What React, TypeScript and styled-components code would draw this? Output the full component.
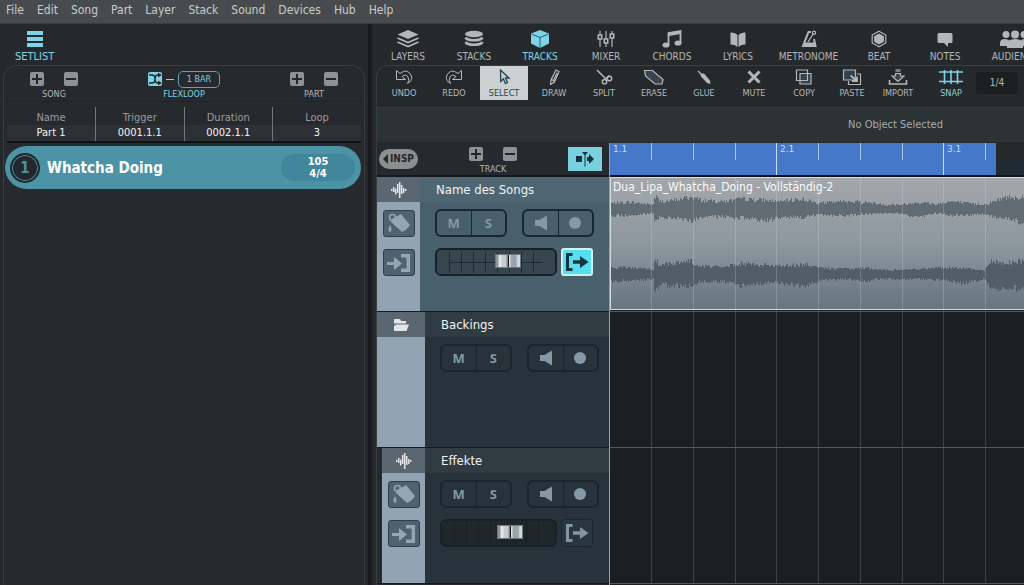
import React from "react";
import styled, { createGlobalStyle, css } from "styled-components";

const sans = `"DejaVu Sans Condensed", "DejaVu Sans", Tahoma, sans-serif`;
const accent = "#7fd3e6";

const Global = createGlobalStyle`
  *, *::before, *::after { box-sizing: border-box; }
  body { margin: 0; background: #26292c; color: #b4b8ba; font: 11px/14px ${sans}; }
  button, select { font: inherit; color: inherit; border: 0; padding: 0; margin: 0; background: none; }
  svg { display: block; flex: none; }
`;

/* ---------- frame ---------- */
const Page = styled.div`
  display: flex;
  flex-direction: column;
  height: 100vh;
  overflow: hidden;
`;
const MenuBar = styled.nav`
  display: flex;
  gap: 13px;
  height: 24px;
  padding: 0 6px 4px;
  background: #484b4d;
  border-bottom: 1px solid #3a3d3f;
  flex: none;
`;
const MenuItem = styled.button`
  font-size: 12px;
  color: #c9cbcc;
`;
const Workspace = styled.div`
  display: flex;
  flex: 1;
  min-height: 0;
`;

/* ---------- setlist ---------- */
const Sidebar = styled.aside`
  display: flex;
  flex-direction: column;
  width: 372px;
  flex: none;
  padding: 6px 3px 0;
  border-right: 4px solid #181a1c;
`;
const Tab = styled.button<{ $active?: boolean; $size?: number }>`
  display: flex;
  flex-direction: column;
  align-items: center;
  gap: 2px;
  font-size: ${(p) => p.$size ?? 10}px;
  line-height: 14px;
  color: ${(p) => (p.$active ? accent : "#b4b6b8")};
`;
const SidebarHead = styled.div`
  display: flex;
  padding-left: 12px;
  height: 35px;
`;
const SetPanel = styled.section`
  flex: 1;
  border: 1px solid #3a3e41;
  border-bottom: 0;
  border-radius: 14px 14px 0 0;
  background: #26292d;
`;
const SetTools = styled.div`
  display: flex;
  justify-content: space-between;
  height: 36px;
  padding: 5px 26px 0;
  border-bottom: 1px solid #222528;
`;
const ToolGroup = styled.div<{ $active?: boolean }>`
  display: flex;
  flex-direction: column;
  align-items: center;
  gap: 1px;
  font-size: 9px;
  line-height: 12px;
  color: ${(p) => (p.$active ? accent : "#b4b6b8")};
`;
const ToolPair = styled.div<{ $gap: number }>`
  display: flex;
  align-items: center;
  gap: ${(p) => p.$gap}px;
  height: 16px;
`;
const SquareButton = styled.button<{ $active?: boolean }>`
  display: grid;
  place-items: center;
  width: 14px;
  height: 14px;
  border-radius: 2px;
  color: #222629;
  background: ${(p) => (p.$active ? accent : "#8f9294")};
`;
const Dash = styled.span`
  width: 8px;
  height: 1px;
  background: ${accent};
`;
const BarLength = styled.button`
  width: 42px;
  height: 17px;
  border: 1px solid #5fa3b6;
  border-radius: 5px;
`;
const PartTable = styled.table`
  width: calc(100% - 6px);
  margin: 5px 3px 0;
  table-layout: fixed;
  border-collapse: collapse;
  border-bottom: 2px solid #111315;
  text-align: center;
  th { height: 17px; padding: 4px 0 0; font-weight: 400; color: #9a9d9f; }
  td { height: 17px; padding: 0; color: #f0f1f1; background: #2d3135; }
  th + th, td + td { border-left: 1px solid #73777a; }
`;
const SongButton = styled.button`
  display: flex;
  align-items: center;
  gap: 7px;
  width: calc(100% - 4px);
  height: 43px;
  margin: 3px 1px 0;
  padding: 0 6px 0 5px;
  border-radius: 22px;
  background: #4c93a6;
  color: #fff;
  font-weight: 700;
  font-size: 15px;
  text-align: left;
`;
const SongNumber = styled.span`
  display: grid;
  place-items: center;
  width: 30px;
  height: 30px;
  border-radius: 50%;
  border: 2px solid #20282d;
  box-shadow: inset 0 0 0 1px #4c93a6;
  background: #24282c;
  color: #4c93a6;
`;
const SongTitle = styled.span`
  flex: 1;
`;
const Tempo = styled.span`
  display: flex;
  flex-direction: column;
  align-items: center;
  width: 74px;
  padding: 2px 0 1px;
  border-radius: 14px;
  background: #41869a;
  font-size: 11px;
  line-height: 12px;
`;

/* ---------- main pane ---------- */
const Main = styled.main`
  display: flex;
  flex-direction: column;
  flex: 1;
  min-width: 0;
  overflow: hidden;
`;
const ViewTabs = styled.nav`
  display: grid;
  grid-template-columns: repeat(6, 66px) 75px repeat(2, 66px) 74px;
  height: 41px;
  padding: 6px 0 0 3px;
`;
const EditPanel = styled.section`
  display: flex;
  flex-direction: column;
  flex: 1;
  margin-left: 4px;
  border: solid #3a3e41;
  border-width: 1px 0 0 1px;
  border-radius: 12px 0 0 0;
`;
const Toolbar = styled.div`
  display: flex;
  align-items: flex-start;
  gap: 2px;
  height: 42px;
  padding-left: 3px;
  border-bottom: 1px solid #36393c;
`;
const Tool = styled.button<{ $w: number; $state?: "on" | "accent" }>`
  display: flex;
  flex-direction: column;
  align-items: center;
  flex: none;
  gap: 2px;
  width: ${(p) => p.$w}px;
  height: 34px;
  padding-top: 3px;
  font-size: 9px;
  line-height: 12px;
  color: #b4b8ba;
  ${(p) => p.$state === "on" && css`background: #cdd0d0; color: #1f4354;`}
  ${(p) => p.$state === "accent" && css`color: ${accent}; margin: 0 0 0 6px;`}
`;
const SnapValue = styled.select`
  appearance: none;
  flex: none;
  width: 42px;
  height: 22px;
  margin: 6px 0 0;
  border-radius: 4px;
  background: #1b1f21;
  font-size: 10px;
  text-align: center;
  text-align-last: center;
`;
const InfoBar = styled.div`
  display: grid;
  place-items: center;
  height: 35px;
  padding-left: 390px;
  border-bottom: 1px solid #25282b;
  background: #2b3335;
  color: #a6abad;
  span { white-space: nowrap; }
`;
const Arranger = styled.div`
  display: flex;
  flex: 1;
  min-height: 0;
`;
const TrackColumn = styled.div`
  width: 232px;
  flex: none;
  background: #26292d;
`;
const TrackTools = styled.div`
  display: flex;
  align-items: flex-start;
  justify-content: space-between;
  height: 34px;
  padding: 3px 7px 0 2px;
  border-bottom: 2px solid #16191b;
`;
const InspectorButton = styled.button`
  display: flex;
  align-items: center;
  justify-content: center;
  gap: 2px;
  width: 39px;
  height: 20px;
  margin-top: 3px;
  border-radius: 10px;
  background: #8c8f90;
  color: #24282b;
  font-weight: 700;
  font-size: 10px;
`;
const FollowButton = styled.button`
  display: grid;
  place-items: center;
  width: 34px;
  height: 24px;
  margin-top: 1px;
  background: #79d0df;
  color: #12323d;
`;

/* ---------- tracks ---------- */
const TrackRow = styled.article<{ $indent?: boolean }>`
  display: flex;
  height: 136px;
  padding-left: ${(p) => (p.$indent ? 5 : 0)}px;
  border-bottom: 1px solid #151a1d;
  &:first-of-type { height: 135px; }
`;
const Strip = styled.div<{ $w: number }>`
  display: flex;
  flex-direction: column;
  align-items: center;
  width: ${(p) => p.$w}px;
  background: #92a3b4;
`;
const StripHead = styled.div`
  display: grid;
  place-items: center;
  align-self: stretch;
  height: 25px;
  margin-bottom: 8px;
  background: #5a6771;
  color: #e2e6e8;
`;
const StripButton = styled.button`
  display: grid;
  place-items: center;
  width: 32px;
  height: 27px;
  margin-bottom: 12px;
  border: 1px solid #303e48;
  border-radius: 3px;
  background: #506270;
  color: #93a6b2;
`;
const TrackBody = styled.div<{ $selected?: boolean }>`
  flex: 1;
  min-width: 0;
  background: ${(p) => (p.$selected ? "#47606c" : "#27323a")};
`;
const TrackName = styled.h2<{ $selected?: boolean }>`
  height: 25px;
  margin: 0 0 7px;
  padding-left: 16px;
  font-size: 13px;
  font-weight: 400;
  line-height: 26px;
  color: #f1f3f4;
  background: ${(p) => (p.$selected ? "#4e6672" : "#303b42")};
`;
const ButtonRow = styled.div`
  display: flex;
  gap: 15px;
  padding-left: 15px;
  margin-bottom: 11px;
`;
const Segmented = styled.div`
  display: flex;
  width: 72px;
  height: 28px;
  border: 2px solid #1a262e;
  border-radius: 6px;
`;
const Segment = styled.button`
  display: grid;
  place-items: center;
  flex: 1;
  color: #8499a5;
  font: 700 13px/14px "Noto Sans", sans-serif;
  & + & { border-left: 1px solid #1a262e; }
`;
const FaderRow = styled.div`
  display: flex;
  gap: 4px;
  padding: 0 16px 0 15px;
`;
const Fader = styled.input<{ $lit?: boolean }>`
  appearance: none;
  flex: 1;
  min-width: 0;
  height: 28px;
  margin: 0;
  padding: 0 1px;
  border: 2px solid #17212a;
  border-radius: 6px;
  background:
    linear-gradient(${(p) => (p.$lit ? "#1e2b33" : "#1f272b")}, ${(p) => (p.$lit ? "#1e2b33" : "#1f272b")}) 12px 12px / calc(100% - 24px) 1px no-repeat,
    repeating-linear-gradient(90deg, ${(p) => (p.$lit ? "#1e2b33" : "#182024")} 0 1px, transparent 1px 12px) 12px 2px / calc(100% - 23px) 21px no-repeat,
    ${(p) => (p.$lit ? "#37464f" : "#1f272b")};
  &::-webkit-slider-thumb {
    appearance: none;
    width: 26px;
    height: 14px;
    margin-top: -2px;
    border: 1px solid #6f787e;
    background: linear-gradient(90deg, #8d9599 0 2px, #e3e5e6 3px 5px, #c9cccd 6px 10px, #7f888d 11px 12px, #11181c 12px 13px, #dfe2e3 13px 14px, #9aa3ac 15px 20px, #d5d9db 22px);
  }
`;
const RouteButton = styled.button<{ $on?: boolean }>`
  display: grid;
  place-items: center;
  width: 32px;
  height: 28px;
  border-radius: 3px;
  border: 1px solid #1a252c;
  background: #2a363e;
  color: #8397a3;
  ${(p) => p.$on && css`border: 2px solid #cdf3f7; background: #56dfee; color: #14353f;`}
`;

/* ---------- timeline ---------- */
const beatLines = (color: string) => css`
  background-image: linear-gradient(90deg,
    transparent 41px, ${color} 41px 42px, transparent 42px 83px, ${color} 83px 84px,
    transparent 84px 125px, ${color} 125px 126px, transparent 126px 166px, ${color} 166px);
  background-size: 167px 100%;
`;
const Timeline = styled.div`
  display: flex;
  flex-direction: column;
  flex: 1;
  min-width: 0;
  border-left: 1px solid #8e9ade;
  overflow: hidden;
`;
const Ruler = styled.div`
  height: 34px;
  flex: none;
  background: linear-gradient(#25292c 0 16px, #1f2a33 16px 32px, #111315 32px);
`;
const LoopRange = styled.div`
  display: flex;
  width: 386px;
  height: 32px;
  overflow: hidden;
  background: #4678c9;
`;
const RulerBar = styled.div`
  flex: none;
  width: 167px;
  height: 32px;
  padding: 0 3px;
  border-right: 1px solid #c6dcf8;
  background-image: linear-gradient(90deg,
    transparent 41px, #a9c6ef 41px 42px, transparent 42px 83px, #a9c6ef 83px 84px,
    transparent 84px 125px, #a9c6ef 125px 126px, transparent 126px);
  background-size: 100% 17px;
  background-repeat: no-repeat;
  font: 9px/12px "DejaVu Sans", sans-serif;
  color: #c4daf7;
`;
const Lane = styled.div`
  height: 136px;
  flex: none;
  border-bottom: 1px solid #54585b;
  background-color: #1b1f21;
  ${beatLines("#3c4143")}
  &:nth-child(2) { height: 135px; }
`;
const LaneRest = styled.div`
  flex: 1;
  background: #1b1f21;
`;
const Clip = styled.div`
  position: relative;
  height: 133px;
  overflow: hidden;
  border: solid #d9dcde;
  border-width: 1px 0 1px 1px;
  background: linear-gradient(#a3a7ab, #8d979e 50%, #667580);
  &::after {
    content: "";
    position: absolute;
    inset: 0;
    left: -1px;
    ${beatLines("rgba(205, 215, 222, 0.25)")}
  }
`;
const ClipName = styled.span`
  position: absolute;
  left: 2px;
  top: 2px;
  white-space: nowrap;
  color: #fafbfb;
  font-size: 12px;
`;

/* ---------- icons ---------- */
const Svg = ({ w = 20, h = 16, children }: { w?: number; h?: number; children: React.ReactNode }) => (
  <svg width={w} height={h} viewBox={`0 0 ${w} ${h}`} fill="none" stroke="currentColor" strokeWidth="1.2" aria-hidden="true">
    {children}
  </svg>
);
const solid = { fill: "currentColor", stroke: "none" };

const icons = {
  setlist: <Svg w={16} h={18}><path {...solid} d="M0 1h16v4H0zM0 7h16v4H0zM0 13h16v4H0z" /></Svg>,
  plus: <Svg w={14} h={14}><path strokeWidth="2" d="M7 2v10M2 7h10" /></Svg>,
  minus: <Svg w={14} h={14}><path strokeWidth="2" d="M2 7h10" /></Svg>,
  flex: <Svg w={14} h={14}><path strokeWidth="1.5" d="M1 3h3Q7 3 7 7t3 4h3M1 11h3Q7 11 7 7t3-4h3" /><path {...solid} d="m10 .5 3.500 2.500L10 5.500zM10 8.500l3.500 2.500-3.500 2.500z" /></Svg>,
  layers: <Svg w={24} h={18}><path {...solid} d="M12 0 22.500 4.500 12 9 1.500 4.500z" /><path strokeWidth="1.700" d="m1.500 8 10.500 4.500L22.500 8M1.500 12l10.500 4.500L22.500 12" /></Svg>,
  stacks: <Svg w={20} h={18}><ellipse {...solid} cx="10" cy="4" rx="9" ry="3.200" /><path strokeWidth="2.600" d="M1.500 7.500c2 3.600 15 3.600 17 0M1.500 12c2 3.600 15 3.600 17 0" /></Svg>,
  tracks: <Svg w={20} h={18}><path {...solid} d="m10 0 9 3.500v10L10 18l-9-4.500v-10z" /><path stroke="#26606f" strokeWidth="1" d="m1.500 4 8.500 3.500L18.500 4M10 7.500V18" /></Svg>,
  mixer: <Svg w={20} h={18}><path d="M4 1v16M10 1v16M16 1v16" /><path fill="#26292c" strokeWidth="1.600" d="M2.300 5h3.400v4H2.300zM8.300 9h3.400v4H8.300zM14.300 4h3.400v4h-3.400z" /></Svg>,
  chords: <Svg w={20} h={18}><path strokeWidth="1.800" d="M6.500 15V3l12-2v12" /><path strokeWidth="3" d="M6.500 4.500l12-2" /><ellipse {...solid} cx="4" cy="15" rx="3.500" ry="2.600" /><ellipse {...solid} cx="16" cy="13" rx="3.500" ry="2.600" /></Svg>,
  lyrics: <Svg w={18} h={18}><path {...solid} d="M1.500 2.500Q6 2 8.500 5v12Q6 14 1.500 14.500zM16.500 2.500Q12 2 9.500 5v12q2.500-3 7-2.500z" /></Svg>,
  metronome: <Svg w={18} h={18}><path strokeWidth="2" d="M11 2H8.500L3 16h12.500L14 9" /><path {...solid} d="M4.500 12.500h10V16h-11z" /><path strokeWidth="1.300" d="m8 12 5.500-8.500" /><circle cx="14" cy="2.700" r="1.600" /></Svg>,
  beat: <Svg w={16} h={18}><path d="m8 1.200 6.800 3.900v7.800L8 16.800l-6.800-3.900V5.100z" /><path {...solid} d="m8 3.500 4.900 2.800v5.400L8 14.500l-4.900-2.800V6.300z" /></Svg>,
  notes: <Svg w={18} h={18}><path {...solid} d="M3 3h12q1.500 0 1.500 1.500v7Q16.500 13 15 13h-3v4l-4-4H3q-1.500 0-1.500-1.500v-7Q1.500 3 3 3z" /></Svg>,
  audience: <Svg w={32} h={18}><g {...solid}><circle cx="7" cy="4.500" r="3.500" /><circle cx="16" cy="4.500" r="4" /><circle cx="25" cy="4.500" r="3.500" /><path d="M1 16v-3q0-4 5-4 3 0 4 1.500Q12 9 16 9t6 1.500Q23 9 26 9q5 0 5 4v3h-7v2H8v-2z" /></g></Svg>,
  undo: <Svg><path strokeWidth="1" d="M2.500 1.500v9h9L8 7.500Q12 4.500 14 8t-.5 6.500Q18.500 12 17.500 7 13.500-1.500 6 4.500z" /></Svg>,
  redo: <Svg><path strokeWidth="1" d="M17.500 1.500v9h-9l3.500-3Q8 4.500 6 8t.5 6.500Q1.500 12 2.500 7 6.500-1.500 14 4.500z" /></Svg>,
  select: <Svg><path strokeWidth="1.300" d="m6.500 1 .3 11.500 2.600-2.700 2 4.700 2.100-1-2-4.500h3.500z" /></Svg>,
  draw: <Svg><path d="m12 1 3 1.500-4.500 10.500-4 2.500.5-4.500zM7.500 10.500l3 2M13 4l-3.500 7.500" /></Svg>,
  split: <Svg><path strokeWidth="1.500" d="m3 1 9 9M15.500 6.500l-4 3.500" /><circle cx="10.500" cy="12.700" r="2.200" strokeWidth="1.400" /><circle cx="15.500" cy="9.500" r="2.200" strokeWidth="1.400" /></Svg>,
  erase: <Svg w={22}><path fill="#39444e" d="M1.500 1.500h8L20 10.500 19 15h-7L2.500 7z" /></Svg>,
  glue: <Svg><path strokeWidth="1.300" d="m4 2 4 4" /><path {...solid} d="M7 4.500h3l6 7 .5 3.500-3.500-1-6.500-7z" /></Svg>,
  mute: <Svg><path strokeWidth="3" d="m4.500 2.500 11 11M15.500 2.500l-11 11" /></Svg>,
  copy: <Svg><path d="M2.500 1h11v10.500h-11z" /><path fill="#33414c" d="M6 4.500h11V15H6z" /><path d="M13.500 4v7.500H6" /></Svg>,
  paste: <Svg><path fill="#33414c" d="M1.500 1h12v10h-12z" /><path d="M15 5h3.500v10.500h-12V12" /><path strokeWidth="1.800" d="m8.500 6.500 6 5M15 7.500V12h-5" /></Svg>,
  import: <Svg><path strokeWidth="1.600" d="M1.500 11v4h17v-4" /><path {...solid} opacity="0.600" d="M7.500 0h5v3h-5z" /><path fill="#39444e" d="M7.500 4.500h5V7H16l-6 5.500L4 7h3.500z" /></Svg>,
  snap: <Svg w={24}><path strokeWidth="1.600" d="M0 3h24M0 12.500h24M5.500 1v14M12 1v14M18.500 1v14" /></Svg>,
  arrowLeft: <Svg w={5} h={10}><path {...solid} d="M5 0v10L0 5z" /></Svg>,
  follow: <Svg w={20} h={16}><path {...solid} d="M1 5h6v6H1zM12 6h2V3l5 5-5 5v-3h-2zM7 1h6l-2.500 3v11.500h-1V4z" /></Svg>,
  wave: <Svg w={16} h={18}><path strokeWidth="1.500" d="M.7 8v2M2.700 6v5M4.700 7.500v6M6.700 3v9M8.700 1v16M10.700 4v9M12.700 7v5M14.700 8v2" /></Svg>,
  folder: <Svg w={16} h={14}><path {...solid} d="M1 1h6l1 2h5v2.500H1zM3.500 6.500H16L13.500 13H1V8z" /></Svg>,
  paint: <Svg w={24} h={22}><path {...solid} d="M5 6 14 1l9 11q-3 5-8 7L4 9zM3 12q-3 6 0 7 3-1 0-7z" /><circle cx="5.500" cy="4.500" r="3" strokeWidth="1.600" /></Svg>,
  routeIn: <Svg w={24} h={20}><path strokeWidth="3" d="M0 10.500h9" /><path {...solid} d="m7 4 8 6.500L7 17z" /><path strokeWidth="3.500" d="M14 2.700h7.300v14.600H14" /></Svg>,
  routeOut: <Svg w={24} h={20}><path strokeWidth="3" d="M7.500 2.500H2.500v15h5" /><path strokeWidth="3.500" d="M8 10h8" /><path {...solid} d="m15 4 8.500 6L15 16z" /></Svg>,
  speaker: <Svg w={14} h={16}><path {...solid} d="M1 5h4.500L13 .500v15L5.500 11H1z" /></Svg>,
  record: <Svg w={14} h={14}><circle {...solid} cx="7" cy="7" r="6" /></Svg>,
};

/* ---------- waveform ---------- */
type Env = [number, number, number][];
const upper: Env = [
  [0, 7, 8], [20, 8, 8], [42, 5, 5], [43, 14, 15], [46, 14, 15], [48, 9, 10], [60, 10, 10], [80, 14, 14], [92, 10, 10], [112, 9, 9],
  [130, 12, 11], [157, 10, 14], [170, 9, 9], [192, 12, 10], [207, 7, 7], [235, 9, 8], [255, 8, 6], [275, 5, 5], [290, 5, 5],
  [305, 8, 10], [325, 6, 5], [340, 9, 8], [373, 5, 6], [382, 9, 9], [395, 14, 11], [414, 14, 18], [500, 12, 14], [700, 9, 10], [1400, 9, 10],
];
const lower: Env = [
  [0, 7, 9], [20, 8, 8], [42, 5, 6], [43, 16, 19], [46, 16, 19], [48, 9, 12], [60, 13, 14], [80, 15, 14], [88, 9, 9], [112, 9, 9],
  [130, 13, 14], [157, 10, 10], [195, 11, 14], [210, 7, 7], [235, 6, 6], [255, 7, 9], [265, 5, 6], [290, 5, 6],
  [315, 6, 6], [335, 8, 7], [350, 7, 11], [373, 5, 6], [380, 15, 19], [395, 13, 15], [414, 16, 20], [500, 14, 14], [700, 9, 10], [1400, 9, 10],
];
const WAVE_WIDTH = 1400;

function wavePath(env: Env, mid: number, seed: number) {
  let s = seed;
  const rnd = () => ((s = (s * 1103515245 + 12345) % 2147483648) / 2147483648);
  const tops: string[] = [];
  const bottoms: string[] = [];
  let k = 0;
  for (let x = 0; x < WAVE_WIDTH; x++) {
    while (k < env.length - 2 && env[k + 1][0] <= x) k++;
    const [x0, u0, d0] = env[k];
    const [x1, u1, d1] = env[k + 1];
    const t = (x - x0) / (x1 - x0);
    const up = (u0 + (u1 - u0) * t) * (0.64 + 0.4 * rnd());
    const down = (d0 + (d1 - d0) * t) * (0.64 + 0.4 * rnd());
    tops.push(`${x} ${Math.round(mid - up)}H${x + 1}`);
    bottoms.unshift(`${x + 1} ${Math.round(mid + down)}H${x}`);
  }
  return `M${tops.join("L")}L${bottoms.join("L")}z`;
}
const upperPath = wavePath(upper, 31, 7);
const lowerPath = wavePath(lower, 96, 91);

/* ---------- data ---------- */
const menu = ["File", "Edit", "Song", "Part", "Layer", "Stack", "Sound", "Devices", "Hub", "Help"];
const views: [string, keyof typeof icons][] = [
  ["LAYERS", "layers"], ["STACKS", "stacks"], ["TRACKS", "tracks"], ["MIXER", "mixer"], ["CHORDS", "chords"],
  ["LYRICS", "lyrics"], ["METRONOME", "metronome"], ["BEAT", "beat"], ["NOTES", "notes"], ["AUDIENCE", "audience"],
];
const tools: [string, keyof typeof icons][] = [
  ["UNDO", "undo"], ["REDO", "redo"], ["SELECT", "select"], ["DRAW", "draw"], ["SPLIT", "split"], ["ERASE", "erase"],
  ["GLUE", "glue"], ["MUTE", "mute"], ["COPY", "copy"],
];

const AddRemove = ({ label }: { label: string }) => (
  <ToolGroup>
    <ToolPair $gap={20}>
      <SquareButton aria-label={`Add ${label.toLowerCase()}`}>{icons.plus}</SquareButton>
      <SquareButton aria-label={`Remove ${label.toLowerCase()}`}>{icons.minus}</SquareButton>
    </ToolPair>
    {label}
  </ToolGroup>
);

interface TrackProps {
  name: string;
  selected?: boolean;
  indent?: boolean;
  folder?: boolean;
}
const Track = ({ name, selected, indent, folder }: TrackProps) => (
  <TrackRow $indent={indent}>
    <Strip $w={selected || indent ? 43 : 48}>
      <StripHead>{folder ? icons.folder : icons.wave}</StripHead>
      {!folder && (
        <>
          <StripButton aria-label={`${name} colour`}>{icons.paint}</StripButton>
          <StripButton aria-label={`${name} input`}>{icons.routeIn}</StripButton>
        </>
      )}
    </Strip>
    <TrackBody $selected={selected}>
      <TrackName $selected={selected}>{name}</TrackName>
      <ButtonRow>
        <Segmented>
          <Segment>M</Segment>
          <Segment>S</Segment>
        </Segmented>
        <Segmented>
          <Segment aria-label="Monitor">{icons.speaker}</Segment>
          <Segment aria-label="Record">{icons.record}</Segment>
        </Segmented>
      </ButtonRow>
      {!folder && (
        <FaderRow>
          <Fader type="range" min={0} max={100} defaultValue={63} $lit={selected} aria-label={`${name} volume`} />
          <RouteButton $on={selected} aria-label={`${name} output`}>{icons.routeOut}</RouteButton>
        </FaderRow>
      )}
    </TrackBody>
  </TrackRow>
);

export default function App() {
  return (
    <Page>
      <Global />
      <MenuBar>
        {menu.map((m) => <MenuItem key={m}>{m}</MenuItem>)}
      </MenuBar>
      <Workspace>
        <Sidebar>
          <SidebarHead>
            <Tab $active $size={11}>{icons.setlist}SETLIST</Tab>
          </SidebarHead>
          <SetPanel>
            <SetTools>
              <AddRemove label="SONG" />
              <ToolGroup $active>
                <ToolPair $gap={4}>
                  <SquareButton $active aria-label="Flexloop">{icons.flex}</SquareButton>
                  <Dash />
                  <BarLength>1 BAR</BarLength>
                </ToolPair>
                FLEXLOOP
              </ToolGroup>
              <AddRemove label="PART" />
            </SetTools>
            <PartTable>
              <thead>
                <tr><th>Name</th><th>Trigger</th><th>Duration</th><th>Loop</th></tr>
              </thead>
              <tbody>
                <tr><td>Part 1</td><td>0001.1.1</td><td>0002.1.1</td><td>3</td></tr>
              </tbody>
            </PartTable>
            <SongButton>
              <SongNumber>1</SongNumber>
              <SongTitle>Whatcha Doing</SongTitle>
              <Tempo><span>105</span><span>4/4</span></Tempo>
            </SongButton>
          </SetPanel>
        </Sidebar>
        <Main>
          <ViewTabs>
            {views.map(([label, icon]) => (
              <Tab key={label} $active={label === "TRACKS"}>{icons[icon]}{label}</Tab>
            ))}
          </ViewTabs>
          <EditPanel>
            <Toolbar>
              {tools.map(([label, icon]) => (
                <Tool key={label} $w={48} $state={label === "SELECT" ? "on" : undefined}>{icons[icon]}{label}</Tool>
              ))}
              <Tool $w={44}>{icons.paste}PASTE</Tool>
              <Tool $w={44}>{icons.import}IMPORT</Tool>
              <Tool $w={46} $state="accent">{icons.snap}SNAP</Tool>
              <SnapValue aria-label="Snap value" defaultValue="1/4">
                <option>1/4</option>
              </SnapValue>
            </Toolbar>
            <InfoBar><span>No Object Selected</span></InfoBar>
            <Arranger>
              <TrackColumn>
                <TrackTools>
                  <InspectorButton>{icons.arrowLeft}INSP</InspectorButton>
                  <AddRemove label="TRACK" />
                  <FollowButton aria-label="Follow playhead">{icons.follow}</FollowButton>
                </TrackTools>
                <Track name="Name des Songs" selected />
                <Track name="Backings" folder />
                <Track name="Effekte" indent />
              </TrackColumn>
              <Timeline>
                <Ruler>
                  <LoopRange>
                    {["1.1", "2.1", "3.1"].map((b) => <RulerBar key={b}>{b}</RulerBar>)}
                  </LoopRange>
                </Ruler>
                <Lane>
                  <Clip>
                    <svg width={WAVE_WIDTH} height="131" aria-hidden="true">
                      <path d={upperPath} fill="#616b74" />
                      <path d={lowerPath} fill="#515d67" />
                    </svg>
                    <ClipName>Dua_Lipa_Whatcha_Doing - Vollständig-2</ClipName>
                  </Clip>
                </Lane>
                <Lane />
                <Lane />
                <LaneRest />
              </Timeline>
            </Arranger>
          </EditPanel>
        </Main>
      </Workspace>
    </Page>
  );
}
